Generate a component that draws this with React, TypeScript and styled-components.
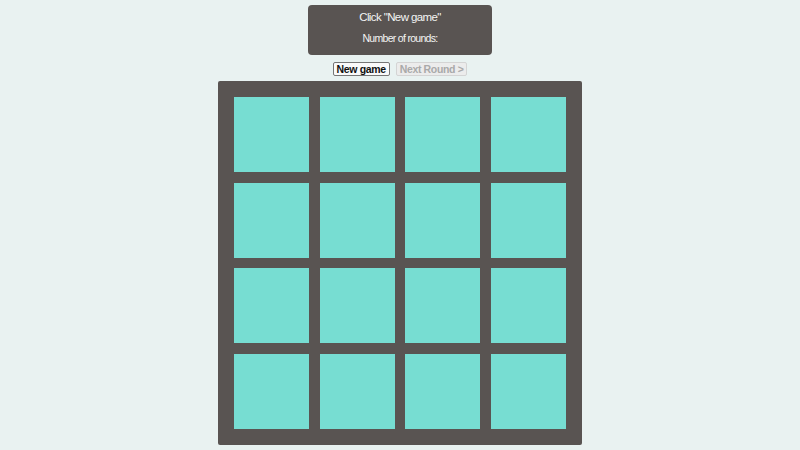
import React, { useState } from "react";
import styled, { createGlobalStyle } from "styled-components";

const GlobalStyle = createGlobalStyle`
  body {
    margin: 0;
    background: #e9f2f1;
    font-family: "Liberation Sans", Arial, sans-serif;
  }
`;

const App = () => {
  const [tiles] = useState(Array.from({ length: 16 }, (_, i) => i));
  return (
    <>
      <GlobalStyle />
      <Page>
        <InfoPanel>
          <InfoTitle>Click "New game"</InfoTitle>
          <InfoText>Number of rounds:</InfoText>
        </InfoPanel>
        <Controls>
          <ControlButton>New game</ControlButton>
          <ControlButton disabled>Next Round &gt;</ControlButton>
        </Controls>
        <Board>
          {tiles.map((t) => (
            <Tile key={t} />
          ))}
        </Board>
      </Page>
    </>
  );
};

const Page = styled.div`
  display: flex;
  flex-direction: column;
  align-items: center;
  padding-top: 5px;
`;
const InfoPanel = styled.div`
  width: 184px;
  height: 50px;
  box-sizing: border-box;
  padding-top: 5px;
  background: #595452;
  border-radius: 4px;
  color: #f4f4f4;
  text-align: center;
`;
const InfoTitle = styled.div`
  font-size: 11.5px;
  line-height: 14px;
  letter-spacing: -0.6px;
  margin-bottom: 8px;
`;
const InfoText = styled.div`
  font-size: 10.5px;
  line-height: 12px;
  letter-spacing: -0.7px;
`;
const Controls = styled.div`
  display: flex;
  gap: 6px;
  margin: 7px 0 5px;
`;
const ControlButton = styled.button`
  height: 14px;
  padding: 0 3px;
  font-family: "Liberation Sans", Arial, sans-serif;
  font-size: 10.5px;
  font-weight: bold;
  line-height: 12px;
  letter-spacing: -0.35px;
  color: #111;
  background: #fafafa;
  border: 1px solid #767676;
  border-radius: 2px;
  &:disabled {
    color: #a9a9a9;
    background: #ececec;
    border-color: #d4d4d4;
  }
`;
const Board = styled.div`
  display: grid;
  grid-template-columns: repeat(4, 75px);
  grid-auto-rows: 75px;
  gap: 10.5px;
  padding: 16px;
  background: #595452;
  border-radius: 2px;
`;
const Tile = styled.div`
  background: #77ddd2;
`;

export default App;
